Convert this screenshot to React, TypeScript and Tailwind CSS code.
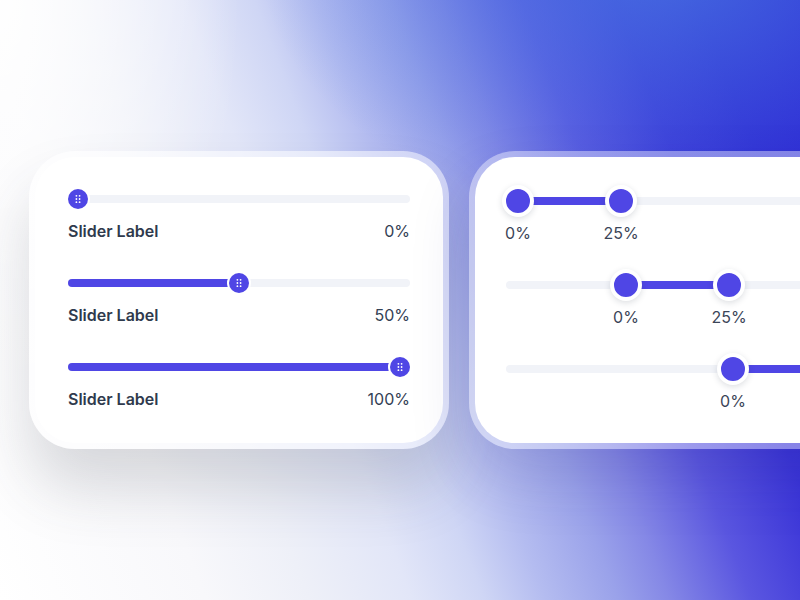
import React from "react";

const FONT = { fontFamily: "Inter, 'Noto Sans', sans-serif" };

type Single = { value: number };
type Range = { from: number; to: number; fromLabel: string; toLabel: string };

const SINGLES: Single[] = [{ value: 0 }, { value: 50 }, { value: 100 }];

// thumb centres in px from the track start
const RANGES: Range[] = [
  { from: 12, to: 115, fromLabel: "0%", toLabel: "25%" },
  { from: 120, to: 223, fromLabel: "0%", toLabel: "25%" },
  { from: 227, to: 330, fromLabel: "0%", toLabel: "" },
];

const TRACK = 342;
const THUMB = 20;

function Grip() {
  return (
    <svg width="20" height="20" viewBox="0 0 20 20">
      {[6.8, 10, 13.2].map((y) =>
        [8.4, 11.6].map((x) => <circle key={`${x}-${y}`} cx={x} cy={y} r="0.9" fill="#fff" />)
      )}
    </svg>
  );
}

function SingleSlider({ value }: Single) {
  const left = ((TRACK - THUMB) * value) / 100;
  return (
    <div className="flex flex-col">
      <div className="relative h-5 flex items-center">
        <div className="h-2 w-full rounded-full bg-[#f1f3f8]" />
        {value > 0 && (
          <div
            className="absolute left-0 h-2 rounded-full bg-[#4f46e5]"
            style={{ width: left + THUMB / 2 }}
          />
        )}
        <div
          className="absolute top-0 size-5 rounded-full bg-[#4f46e5] ring-2 ring-white"
          style={{ left }}
        >
          <Grip />
        </div>
      </div>
      <div className="mt-3 flex items-center justify-between h-5 text-[16px] text-[#334155]">
        <span className="font-semibold text-[#2f3a4d]">Slider Label</span>
        <span>{value}%</span>
      </div>
    </div>
  );
}

function RangeSlider({ from, to, fromLabel, toLabel }: Range) {
  return (
    <div className="relative h-[58px]">
      <div className="absolute left-0 right-0 top-[12px] h-2 rounded-full bg-[#f1f3f8]" />
      <div
        className="absolute top-[12px] h-2 bg-[#4f46e5]"
        style={{ left: from, width: to - from }}
      />
      {[
        { x: from, label: fromLabel },
        { x: to, label: toLabel },
      ].map((t, i) => (
        <React.Fragment key={i}>
          <div
            className="absolute top-0 size-8 -translate-x-1/2 rounded-full border-4 border-white bg-[#4f46e5] shadow-[0_2px_6px_rgba(30,41,59,0.15)]"
            style={{ left: t.x }}
          />
          {t.label && (
            <span
              className="absolute top-[38px] -translate-x-1/2 text-[16px] leading-5 text-[#3b4558]"
              style={{ left: t.x }}
            >
              {t.label}
            </span>
          )}
        </React.Fragment>
      ))}
    </div>
  );
}

export default function App() {
  return (
    <div
      className="relative w-[800px] h-[600px] overflow-hidden bg-[radial-gradient(ellipse_240px_420px_at_0px_0px,rgba(255,255,255,0.95)_0%,rgba(255,255,255,0.45)_55%,rgba(255,255,255,0)_100%),radial-gradient(ellipse_400px_260px_at_660px_-40px,rgba(76,128,228,0.75)_0%,rgba(76,128,228,0.3)_60%,rgba(76,128,228,0)_100%),linear-gradient(69deg,#ffffff_0%,#f8f8fb_20%,#eef0f8_30%,#e2e6f8_40%,#cfd6f5_47%,#b4bcf0_53%,#9aa2ea_60%,#8588e6_65%,#5a56e0_73%,#3a34d8_82%,#2e28d4_90%,#2a22d4_100%)]"
      style={FONT}
    >
      <div className="flex gap-5 pt-[151px] pl-[29px]">
        <div className="shrink-0 rounded-[46px] bg-white/50 p-1.5 shadow-[0_40px_60px_rgba(60,64,80,0.18)]">
          <div className="w-[408px] h-[286px] rounded-[40px] bg-white px-[33px] pt-[32px] flex flex-col gap-8">
            {SINGLES.map((s, i) => (
              <SingleSlider key={i} value={s.value} />
            ))}
          </div>
        </div>

        <div className="shrink-0 rounded-[46px] bg-white/40 p-1.5 shadow-[0_30px_60px_rgba(40,40,120,0.15)]">
          <div className="w-[408px] h-[286px] rounded-[40px] bg-white pl-[31px] pr-[31px] pt-[28px] flex flex-col gap-[26px]">
            {RANGES.map((r, i) => (
              <RangeSlider key={i} {...r} />
            ))}
          </div>
        </div>
      </div>
    </div>
  );
}
